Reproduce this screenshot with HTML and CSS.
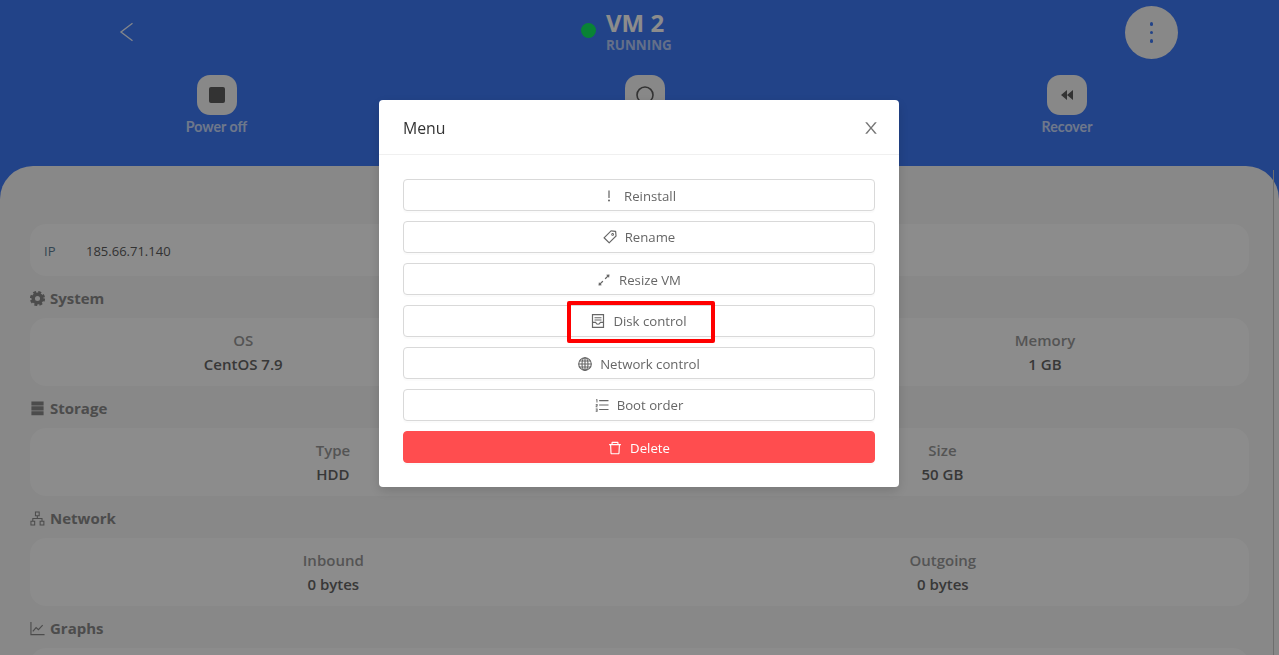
FILE: index.html
```html
<!DOCTYPE html>
<html lang="en">
<head>
<meta charset="utf-8">
<title>VM 2</title>
<link rel="stylesheet" href="styles.css">
</head>
<body>
<div class="page">
  <header class="hero">
    <div class="topbar">
      <button class="back" aria-label="Back">
        <svg width="16" height="20" viewBox="0 0 16 20"><path d="M13.5 1.2 2 10l11.5 8.8" fill="none" stroke="#fff" stroke-width="1.4"/></svg>
      </button>
      <div class="vm">
        <span class="dot"></span>
        <div class="vm-text">
          <div class="vm-name">VM 2</div>
          <div class="vm-state">RUNNING</div>
        </div>
      </div>
      <button class="more" aria-label="More">
        <span></span><span></span><span></span>
      </button>
    </div>
    <div class="actions">
      <div class="action">
        <div class="action-btn"><span class="stop"></span></div>
        <div class="action-label">Power off</div>
      </div>
      <div class="action">
        <div class="action-btn"><svg width="20" height="20" viewBox="0 0 20 20"><circle cx="10" cy="10" r="8" fill="none" stroke="#5d5d5d" stroke-width="1.6"/></svg></div>
      </div>
      <div class="action">
        <div class="action-btn"><svg width="14" height="12" viewBox="0 0 14 12"><path d="M7 1v10L1 6zM13 1v10L7 6z" fill="#5d5d5d"/></svg></div>
        <div class="action-label">Recover</div>
      </div>
    </div>
  </header>

  <main class="panel">
    <span class="scroll-line"></span>
    <section class="card card-ip">
      <span class="ip-label">IP</span>
      <span class="ip-value">185.66.71.140</span>
    </section>

    <h2 class="heading">
      <svg class="h-icon" viewBox="0 0 16 16"><circle cx="8" cy="8" r="4.600" fill="none" stroke="#8a8a8a" stroke-width="3.800"/><circle cx="8" cy="8" r="6.900" fill="none" stroke="#8a8a8a" stroke-width="2.400" stroke-dasharray="3.100 2.320"/></svg>
      System
    </h2>
    <section class="card card-stats">
      <div class="stat"><div class="stat-label">OS</div><div class="stat-value">CentOS 7.9</div></div>
      <div class="stat stat-hidden"></div>
      <div class="stat"><div class="stat-label">Memory</div><div class="stat-value">1 GB</div></div>
    </section>

    <h2 class="heading">
      <svg class="h-icon" viewBox="0 0 16 16"><path d="M1.500 .5h13v4.400h-13zM1.500 5.700h13v4.400h-13zM1.500 10.900h13v4.400h-13z" fill="#8a8a8a"/></svg>
      Storage
    </h2>
    <section class="card card-stats">
      <div class="stat"><div class="stat-label">Type</div><div class="stat-value">HDD</div></div>
      <div class="stat"><div class="stat-label">Size</div><div class="stat-value">50 GB</div></div>
    </section>

    <h2 class="heading">
      <svg class="h-icon" viewBox="0 0 16 16"><path d="M5.800 1h4v4h-4zM1 11h4v4H1zM10.800 11h4v4h-4zM7.800 5v3M3 11V8h9.800v3" fill="none" stroke="#8a8a8a" stroke-width="1.100"/></svg>
      Network
    </h2>
    <section class="card card-stats">
      <div class="stat"><div class="stat-label">Inbound</div><div class="stat-value">0 bytes</div></div>
      <div class="stat"><div class="stat-label">Outgoing</div><div class="stat-value">0 bytes</div></div>
    </section>

    <h2 class="heading">
      <svg class="h-icon" viewBox="0 0 16 16"><path d="M1 1v13.500h14.500" fill="none" stroke="#8a8a8a" stroke-width="1.200"/><path d="M3 11l3.500-4 2.500 2.300 4.500-4.800" fill="none" stroke="#8a8a8a" stroke-width="1.200"/></svg>
      Graphs
    </h2>
    <section class="card card-stats"></section>
  </main>
</div>

<div class="overlay">
  <div class="modal">
    <div class="modal-head">
      <span class="modal-title">Menu</span>
      <button class="modal-close" aria-label="Close">
        <svg class="ic" viewBox="64 64 896 896"><path d="M563.800 512l262.500-312.900c4.400-5.200.7-13.100-6.100-13.100h-79.800c-4.700 0-9.200 2.100-12.300 5.700L511.600 449.800 295.100 191.700c-3-3.600-7.500-5.700-12.300-5.700H203c-6.800 0-10.500 7.900-6.100 13.100L459.400 512 196.900 824.900A7.950 7.950 0 0 0 203 838h79.800c4.700 0 9.200-2.100 12.300-5.700l216.500-258.100 216.500 258.100c3 3.600 7.500 5.700 12.300 5.700h79.800c6.800 0 10.500-7.900 6.100-13.100L563.800 512z"/></svg>
      </button>
    </div>
    <div class="modal-body">
      <button class="menu-btn">
        <svg class="ic" viewBox="64 64 896 896"><path d="M448 804a64 64 0 1 0 128 0 64 64 0 1 0-128 0zm32-168h64c4.400 0 8-3.600 8-8V164c0-4.400-3.600-8-8-8h-64c-4.400 0-8 3.600-8 8v464c0 4.400 3.600 8 8 8z"/></svg>
        <span>Reinstall</span>
      </button>
      <button class="menu-btn">
        <svg class="ic" viewBox="64 64 896 896"><path d="M938 458.800l-29.600-312.600c-1.500-16.200-14.400-29-30.600-30.600L565.200 86h-.4c-3.200 0-5.700 1-7.600 2.900L88.900 557.200a9.960 9.960 0 0 0 0 14.100l363.800 363.800c1.900 1.900 4.400 2.900 7.100 2.900s5.200-1 7.100-2.900l468.300-468.300c2-2.100 3-5 2.800-8zM459.700 834.700L189.300 564.300 589 164.600 836 188l23.400 247-399.700 399.700zM680 256c-48.500 0-88 39.500-88 88s39.500 88 88 88 88-39.500 88-88-39.500-88-88-88zm0 120c-17.700 0-32-14.300-32-32s14.300-32 32-32 32 14.300 32 32-14.300 32-32 32z"/></svg>
        <span>Rename</span>
      </button>
      <button class="menu-btn">
        <svg class="ic" viewBox="64 64 896 896"><path d="M855 160.100l-189.200 23.500c-6.600.8-9.300 8.800-4.700 13.500l54.700 54.700-153.500 153.500a8.030 8.030 0 0 0 0 11.300l45.100 45.100c3.100 3.100 8.200 3.100 11.300 0l153.600-153.600 54.700 54.700a7.940 7.940 0 0 0 13.500-4.700L863.900 169a7.900 7.900 0 0 0-8.900-8.900zM416.600 562.300a8.030 8.030 0 0 0-11.300 0L251.800 715.900l-54.700-54.700a7.940 7.940 0 0 0-13.500 4.700L160.100 855c-.6 5.200 3.700 9.500 8.900 8.900l189.200-23.500c6.600-.8 9.300-8.800 4.700-13.500l-54.700-54.700 153.600-153.600c3.100-3.100 3.100-8.200 0-11.300l-45.200-45z"/></svg>
        <span>Resize VM</span>
      </button>
      <button class="menu-btn menu-btn-marked">
        <svg class="ic" viewBox="0 0 14 14"><path d="M1.500.7h11v12.600h-11z" fill="none" stroke="#666" stroke-width="1.200"/><path d="M3.500 3.200h7v1h-7zM3.500 5.400h7v1h-7z" fill="#666"/><path d="M1.500 8.400h3.200c.3 1.200 1.200 1.800 2.300 1.800s2-.6 2.300-1.800h3.200" fill="none" stroke="#666" stroke-width="1.100"/></svg>
        <span>Disk control</span>
        <span class="marker"></span>
      </button>
      <button class="menu-btn">
        <svg class="ic" viewBox="0 0 14 14"><g fill="none" stroke="#666" stroke-width="1.150"><circle cx="7" cy="7" r="6.300"/><ellipse cx="7" cy="7" rx="3" ry="6.300"/><path d="M7 .7v12.600M.7 7h12.600M1.500 4h11M1.500 10h11"/></g></svg>
        <span>Network control</span>
      </button>
      <button class="menu-btn">
        <svg class="ic" viewBox="64 64 896 896"><path d="M920 760H336c-4.400 0-8 3.600-8 8v56c0 4.400 3.600 8 8 8h584c4.400 0 8-3.600 8-8v-56c0-4.400-3.600-8-8-8zm0-568H336c-4.400 0-8 3.600-8 8v56c0 4.400 3.600 8 8 8h584c4.400 0 8-3.600 8-8v-56c0-4.400-3.600-8-8-8zm0 284H336c-4.400 0-8 3.600-8 8v56c0 4.400 3.600 8 8 8h584c4.400 0 8-3.600 8-8v-56c0-4.400-3.600-8-8-8zM130 150h90v200h-60V210h-30zM110 450h120v130h-60v30h60v50H110V540h60v-40h-60zM110 730h120v210H110v-50h60v-30h-60v-50h60v-30h-60z"/></svg>
        <span>Boot order</span>
      </button>
      <button class="menu-btn menu-btn-danger">
        <svg class="ic" viewBox="64 64 896 896"><path d="M360 184h-8c4.400 0 8-3.600 8-8v8h304v-8c0 4.400 3.600 8 8 8h-8v72h72v-80c0-35.300-28.700-64-64-64H352c-35.300 0-64 28.700-64 64v80h72v-72zm504 72H160c-17.700 0-32 14.300-32 32v32c0 4.400 3.600 8 8 8h60.400l24.700 523c1.600 34.100 29.800 61 63.900 61h454c34.200 0 62.300-26.800 63.900-61l24.700-523H888c4.400 0 8-3.600 8-8v-32c0-17.700-14.300-32-32-32zM731.300 840H292.700l-24.200-512h487l-24.200 512z"/></svg>
        <span>Delete</span>
      </button>
    </div>
  </div>
</div>
</body>
</html>
```

FILE: styles.css
```css
* { box-sizing: border-box; }
html, body { margin: 0; height: 100%; overflow: hidden; }
body { font-family: "Open Sans", "Noto Sans", sans-serif; background: #3e7af8; }
button { font-family: inherit; }

.page { height: 655px; overflow: hidden; display: flex; flex-direction: column; }

.hero { height: 166px; flex: none; background: #3e7af8; color: #fff; }
.topbar { height: 75px; display: flex; align-items: flex-start; }
.back {
  width: 16px; height: 20px; margin: 22px 0 0 119px; padding: 0;
  background: none; border: 0; line-height: 0; opacity: .9;
}
.vm { margin-left: 446px; margin-top: 8px; display: flex; align-items: center; gap: 10px; width: 544px; }
.dot { width: 15px; height: 15px; border-radius: 50%; background: #12ee62; margin-top: 1px; }
.vm-name { font-size: 24px; font-weight: 700; line-height: 30px; color: #fff; }
.vm-state { font-size: 13.400px; font-weight: 700; line-height: 14px; color: #dfe7fb; opacity: .75; margin-top: 0; }
.more {
  width: 53px; height: 53px; margin-top: 6px; padding: 0; border: 0; border-radius: 50%;
  background: #f7f7f7; display: flex; flex-direction: column; align-items: center; justify-content: center; gap: 5.200px;
}
.more span { width: 3.400px; height: 3.400px; border-radius: 50%; background: #3e7af8; }

.actions { display: grid; grid-template-columns: 433px 424px 420px; }
.action { display: flex; flex-direction: column; align-items: center; }
.action-btn {
  width: 40px; height: 40px; border-radius: 13px; background: #f7f7f7;
  display: flex; align-items: center; justify-content: center;
}
.stop { width: 16px; height: 16px; border-radius: 2px; background: #5d5d5d; }
.action-label { font-family: Lato, sans-serif; font-size: 14.200px; font-weight: 700; line-height: 23px; color: #fff; opacity: .72; }

.panel {
  position: relative; flex: 1; background: #f7f7f7;
  border-radius: 33px 33px 0 0; padding: 58px 30px 0;
}
.scroll-line { position: absolute; right: 5px; top: 4px; bottom: 0; width: 1px; background: #c8c8c8; }
.card { background: #fff; border-radius: 16px; }
.card-ip { height: 52px; display: flex; align-items: center; padding: 1px 0 0 14px; font-size: 13px; }
.ip-label { width: 42px; color: #5d7f95; }
.ip-value { color: #5c5c5c; }
.heading {
  margin: 12px 0 9px; height: 21px; display: flex; align-items: center; gap: 5px;
  font-size: 15px; font-weight: 700; line-height: 21px; color: #8a8a8a;
}
.h-icon { width: 15px; height: 15px; flex: none; }
.card-stats { height: 68px; display: flex; justify-content: space-around; align-items: center; text-align: center; }
.stat-hidden { width: 37px; }
.stat-label { font-size: 15px; font-weight: 600; line-height: 24px; color: #9a9a9a; }
.stat-value { font-size: 15px; line-height: 24px; color: #666; font-weight: 600; }

.overlay { position: fixed; inset: 0; background: rgba(0,0,0,.45); }
.modal {
  width: 520px; height: 387px; margin: 100px 0 0 379px; background: #fff; border-radius: 4px;
  box-shadow: 0 4px 12px rgba(0,0,0,.15);
}
.modal-head {
  height: 55px; padding: 1px 20px 0 24px; display: flex; align-items: center; justify-content: space-between;
  border-bottom: 1px solid #f0f0f0;
}
.modal-title { font-size: 15.800px; font-weight: 500; color: #333; }
.modal-close { width: 16px; height: 16px; padding: 0; background: none; border: 0; line-height: 0; }
.modal-close .ic { width: 16px; height: 16px; fill: #777; margin: 0; }
.modal-body { padding: 24px; display: flex; flex-direction: column; gap: 10px; }
.menu-btn {
  position: relative; height: 32px; padding: 0; display: flex; align-items: center; justify-content: center;
  background: #fff; border: 1px solid #d9d9d9; border-radius: 4px; box-shadow: 0 2px 0 rgba(0,0,0,.015);
  font-size: 13.200px; color: #666;
}
.menu-btn:nth-child(odd) { padding-top: 2px; }
.ic { width: 14px; height: 14px; margin-right: 8px; fill: #666; flex: none; }
.menu-btn-danger { background: #ff4d4f; border-color: #ff4d4f; color: #fff; font-weight: 500; }
.menu-btn-danger .ic { fill: #fff; }
.marker {
  position: absolute; left: 163px; top: -5px; width: 148px; height: 42px;
  border: 4px solid #f00; border-radius: 2px;
}
```
